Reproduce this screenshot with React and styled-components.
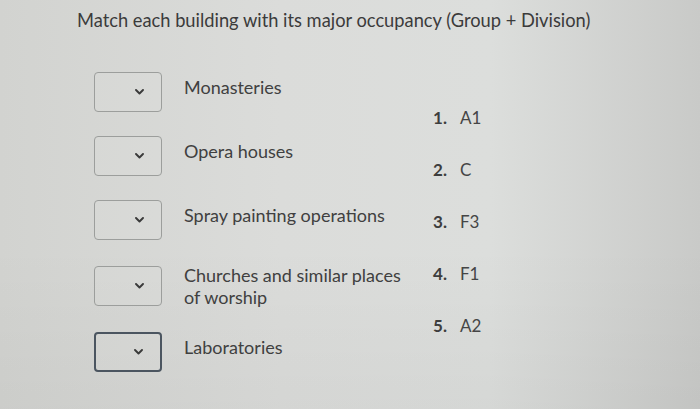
import styled, { createGlobalStyle } from "styled-components";

const GlobalStyle = createGlobalStyle`
  html, body {
    margin: 0;
    padding: 0;
  }
  body {
    width: 700px;
    height: 409px;
    overflow: hidden;
    font-family: Lato, "Open Sans", "Liberation Sans", sans-serif;
    background:
      linear-gradient(180deg, rgba(0, 0, 0, 0) 60%, rgba(0, 0, 0, 0.03) 100%),
      linear-gradient(90deg, #d2d3d0 0%, #dbdcda 40%, #dcdedc 70%, #c9cac8 100%);
  }
`;

const items = [
  { id: 1, label: "Monasteries" },
  { id: 2, label: "Opera houses" },
  { id: 3, label: "Spray painting operations" },
  { id: 4, label: "Churches and similar places of worship", wrap: true },
  { id: 5, label: "Laboratories", focused: true },
];

const answers = ["A1", "C", "F3", "F1", "A2"];

const Chevron = () => (
  <svg width="9" height="6" viewBox="0 0 9 6">
    <polyline
      points="1,1 4.5,4.5 8,1"
      fill="none"
      stroke="#3a3a3a"
      strokeWidth="1.9"
      strokeLinecap="round"
      strokeLinejoin="round"
    />
  </svg>
);

const App = () => {
  return (
    <Page>
      <GlobalStyle />
      <Title>Match each building with its major occupancy (Group + Division)</Title>
      <Question>
        <Pairs>
          {items.map((item) => (
            <Row key={item.id}>
              <Select $focused={item.focused}>
                <Chevron />
              </Select>
              <Label $wrap={item.wrap}>{item.label}</Label>
            </Row>
          ))}
        </Pairs>
        <Choices>
          {answers.map((answer, i) => (
            <Choice key={answer}>
              <Num>{i + 1}.</Num>
              <span>{answer}</span>
            </Choice>
          ))}
        </Choices>
      </Question>
    </Page>
  );
};

export default App;

const Page = styled.div`
  padding: 9px 0 0 77px;
`;

const Title = styled.h1`
  margin: 0;
  font-size: 18.3px;
  line-height: 22px;
  font-weight: 400;
  color: #3b3b3b;
`;

const Question = styled.div`
  display: flex;
  padding: 41px 0 0 17px;
`;

const Pairs = styled.div`
  display: flex;
  flex-direction: column;
  gap: 24px;
  width: 339px;
`;

const Row = styled.div`
  display: flex;
  align-items: center;
  gap: 22px;
`;

const Select = styled.div`
  flex: none;
  box-sizing: border-box;
  width: 68px;
  height: 40px;
  display: flex;
  align-items: center;
  justify-content: flex-end;
  padding-right: 17px;
  border: ${(p) => (p.$focused ? "2px solid #4b5560" : "1px solid #9c9e9c")};
  border-radius: 4px;
  background: rgba(255, 255, 255, 0.06);
`;

const Label = styled.div`
  width: 230px;
  padding-bottom: ${(p) => (p.$wrap ? "0" : "10px")};
  font-size: 18px;
  line-height: 22px;
  color: #404040;
`;

const Choices = styled.ol`
  list-style: none;
  margin: 0;
  padding: 35px 0 0;
  display: flex;
  flex-direction: column;
  gap: 30px;
`;

const Choice = styled.li`
  display: flex;
  font-size: 17px;
  line-height: 22px;
  color: #454545;
`;

const Num = styled.span`
  width: 27px;
  font-weight: 700;
  color: #3d3d3d;
`;
